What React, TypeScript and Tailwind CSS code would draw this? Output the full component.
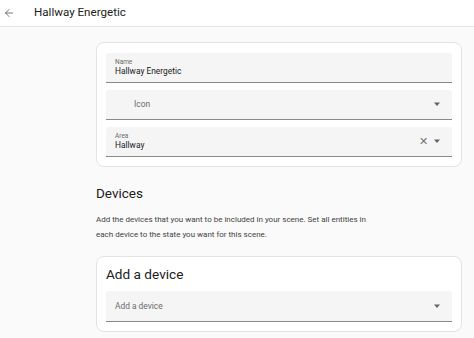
import { ArrowLeft } from "lucide-react";

function Caret() {
  return (
    <svg width="8" height="5" viewBox="0 0 8 5" className="text-[#616161]">
      <path d="M1 0.5h6L4 4z" fill="currentColor" />
    </svg>
  );
}

function Field({ label, value, placeholder, indent, clear, caret }: {
  label?: string;
  value?: string;
  placeholder?: string;
  indent?: boolean;
  clear?: boolean;
  caret?: boolean;
}) {
  return (
    <div className="h-[30px] bg-[#f5f5f5] border-b border-[#8a8a8a] rounded-t-[3px] flex items-center pl-[9px] pr-[11px]">
      <div className={`flex-1 flex flex-col justify-center ${indent ? "pl-[19px]" : ""}`}>
        {label && <div className="text-[6.5px] leading-[8px] text-[#6b6b6b]">{label}</div>}
        {value && <div className="text-[8.4px] leading-[11px] text-[#212121]">{value}</div>}
        {placeholder && <div className="text-[8.4px] leading-[11px] text-[#6b6b6b]">{placeholder}</div>}
      </div>
      {clear && <span className="text-[#757575] text-[11px] leading-none mr-[5px]">✕</span>}
      {caret && <Caret />}
    </div>
  );
}

export default function App() {
  return (
    <div className="w-[474px] h-[338px] bg-[#fafafa] overflow-hidden" style={{ fontFamily: "Roboto, sans-serif" }}>
      <div className="h-[27px] bg-white border-b border-[#e6e6e6] flex items-center">
        <ArrowLeft size={12} strokeWidth={1.6} className="ml-[3px] text-[#555]" />
        <span className="ml-[19px] text-[11.6px] text-[#212121]">Hallway Energetic</span>
      </div>

      <div className="ml-[96px] w-[366px] pt-[15px]">
        <div className="bg-white border border-[#e3e3e3] rounded-[8px] px-[9px] pt-[10px] pb-[9px] flex flex-col gap-[7px]">
          <Field label="Name" value="Hallway Energetic" />
          <Field placeholder="Icon" indent caret />
          <Field label="Area" value="Hallway" clear caret />
        </div>

        <div className="mt-[17px] text-[13.5px] leading-[18px] text-[#212121]">Devices</div>
        <p className="mt-[10px] text-[8px] leading-[15px] text-[#424242]">
          Add the devices that you want to be included in your scene. Set all entities in<br />
          each device to the state you want for this scene.
        </p>

        <div className="mt-[14px] bg-white border border-[#e3e3e3] rounded-[8px] px-[9px] pt-[7px] pb-[9px]">
          <div className="text-[13.6px] leading-[20px] text-[#212121]">Add a device</div>
          <div className="mt-[7px]">
            <div className="h-[31px] bg-[#f5f5f5] border-b border-[#8a8a8a] rounded-t-[3px] flex items-center pl-[9px] pr-[11px]">
              <span className="flex-1 text-[8.4px] text-[#6b6b6b]">Add a device</span>
              <Caret />
            </div>
          </div>
        </div>
      </div>
    </div>
  );
}
